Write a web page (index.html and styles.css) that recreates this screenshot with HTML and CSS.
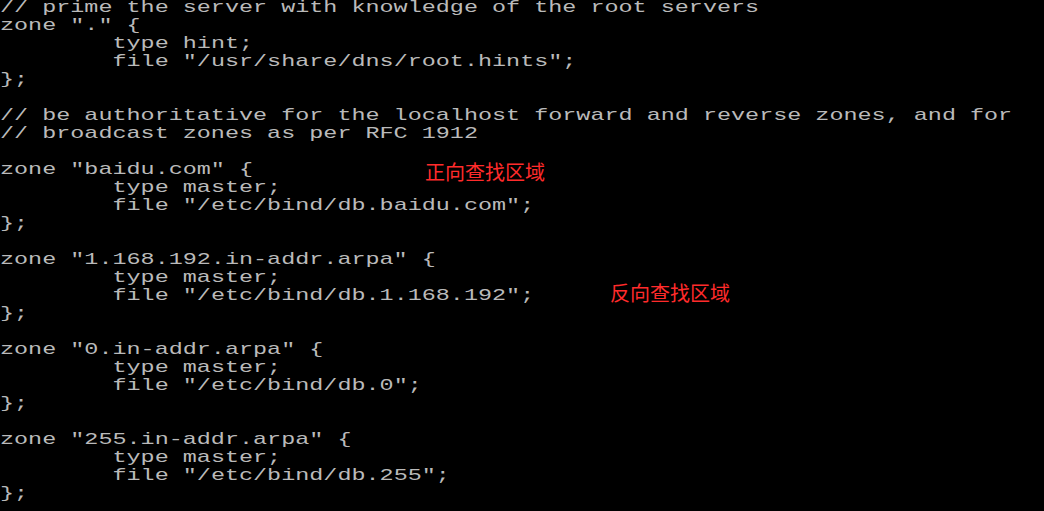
FILE: index.html
```html
<!DOCTYPE html>
<html lang="en">
<head>
    <meta charset="UTF-8">
    <meta name="viewport" content="width=device-width, initial-scale=1.0">
    <title>named.conf.default-zones</title>
    <link rel="stylesheet" href="styles.css">
</head>
<body>
    <div class="terminal">
        <div class="screen">
            <div class="ln">// prime the server with knowledge of the root servers</div>
            <div class="ln">zone "." {</div>
            <div class="ln">	type hint;</div>
            <div class="ln">	file "/usr/share/dns/root.hints";</div>
            <div class="ln">};</div>
            <div class="ln"></div>
            <div class="ln">// be authoritative for the localhost forward and reverse zones, and for</div>
            <div class="ln">// broadcast zones as per RFC 1912</div>
            <div class="ln"></div>
            <div class="ln">zone "baidu.com" {</div>
            <div class="ln">	type master;</div>
            <div class="ln">	file "/etc/bind/db.baidu.com";</div>
            <div class="ln">};</div>
            <div class="ln"></div>
            <div class="ln">zone "1.168.192.in-addr.arpa" {</div>
            <div class="ln">	type master;</div>
            <div class="ln">	file "/etc/bind/db.1.168.192";</div>
            <div class="ln">};</div>
            <div class="ln"></div>
            <div class="ln">zone "0.in-addr.arpa" {</div>
            <div class="ln">	type master;</div>
            <div class="ln">	file "/etc/bind/db.0";</div>
            <div class="ln">};</div>
            <div class="ln"></div>
            <div class="ln">zone "255.in-addr.arpa" {</div>
            <div class="ln">	type master;</div>
            <div class="ln">	file "/etc/bind/db.255";</div>
            <div class="ln">};</div>
        </div>
        <span class="note note-forward">正向查找区域</span>
        <span class="note note-reverse">反向查找区域</span>
    </div>
</body>
</html>
```

FILE: styles.css
```css
html, body {
    margin: 0;
    padding: 0;
    background-color: #000;
    height: 100%;
    overflow: hidden;
}
.terminal {
    position: relative;
    width: 1044px;
    height: 511px;
    overflow: hidden;
    background-color: #000;
}
.screen {
    width: max-content;
    margin-top: -1px;
    font-family: "Liberation Mono", "DejaVu Sans Mono", monospace;
    font-size: 17px;
    line-height: 18px;
    color: #bababa;
    transform: scaleX(1.378);
    transform-origin: 0 0;
}
.ln {
    width: max-content;
    min-height: 18px;
    white-space: pre;
    tab-size: 8;
}
/* red notes drawn over the screenshot */
.note {
    position: absolute;
    font-family: "Noto Sans CJK SC", sans-serif;
    font-size: 20px;
    line-height: 24px;
    color: #ff2b2b;
    white-space: nowrap;
}
.note-forward {
    left: 425px;
    top: 160px;
}
.note-reverse {
    left: 610px;
    top: 281px;
}
```
